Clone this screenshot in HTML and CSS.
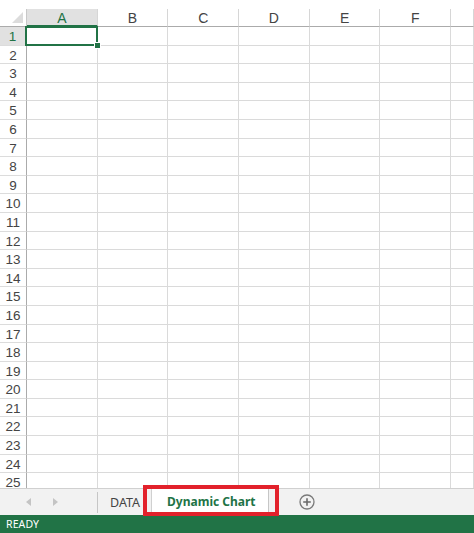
FILE: index.html
```html
<!DOCTYPE html>
<html lang="en">
<head>
<meta charset="utf-8">
<title>Dynamic Chart</title>
<link rel="stylesheet" href="styles.css">
</head>
<body>
<div class="top"></div>
<div class="sheet">
  <div class="corner"><svg width="11" height="11" viewBox="0 0 11 11"><polygon points="11,0 11,11 0,11" fill="#dcdcdc"/></svg></div>
  <div class="ch sel-h">A</div><div class="ch">B</div><div class="ch">C</div><div class="ch">D</div><div class="ch">E</div><div class="ch">F</div><div class="ch"></div>

  <div class="rh sel-r">1</div><div class="c a1"></div><div class="c"></div><div class="c"></div><div class="c"></div><div class="c"></div><div class="c"></div><div class="c"></div>
  <div class="rh">2</div><div class="c"></div><div class="c"></div><div class="c"></div><div class="c"></div><div class="c"></div><div class="c"></div><div class="c"></div>
  <div class="rh">3</div><div class="c"></div><div class="c"></div><div class="c"></div><div class="c"></div><div class="c"></div><div class="c"></div><div class="c"></div>
  <div class="rh">4</div><div class="c"></div><div class="c"></div><div class="c"></div><div class="c"></div><div class="c"></div><div class="c"></div><div class="c"></div>
  <div class="rh">5</div><div class="c"></div><div class="c"></div><div class="c"></div><div class="c"></div><div class="c"></div><div class="c"></div><div class="c"></div>
  <div class="rh">6</div><div class="c"></div><div class="c"></div><div class="c"></div><div class="c"></div><div class="c"></div><div class="c"></div><div class="c"></div>
  <div class="rh">7</div><div class="c"></div><div class="c"></div><div class="c"></div><div class="c"></div><div class="c"></div><div class="c"></div><div class="c"></div>
  <div class="rh">8</div><div class="c"></div><div class="c"></div><div class="c"></div><div class="c"></div><div class="c"></div><div class="c"></div><div class="c"></div>
  <div class="rh">9</div><div class="c"></div><div class="c"></div><div class="c"></div><div class="c"></div><div class="c"></div><div class="c"></div><div class="c"></div>
  <div class="rh">10</div><div class="c"></div><div class="c"></div><div class="c"></div><div class="c"></div><div class="c"></div><div class="c"></div><div class="c"></div>
  <div class="rh">11</div><div class="c"></div><div class="c"></div><div class="c"></div><div class="c"></div><div class="c"></div><div class="c"></div><div class="c"></div>
  <div class="rh">12</div><div class="c"></div><div class="c"></div><div class="c"></div><div class="c"></div><div class="c"></div><div class="c"></div><div class="c"></div>
  <div class="rh">13</div><div class="c"></div><div class="c"></div><div class="c"></div><div class="c"></div><div class="c"></div><div class="c"></div><div class="c"></div>
  <div class="rh">14</div><div class="c"></div><div class="c"></div><div class="c"></div><div class="c"></div><div class="c"></div><div class="c"></div><div class="c"></div>
  <div class="rh">15</div><div class="c"></div><div class="c"></div><div class="c"></div><div class="c"></div><div class="c"></div><div class="c"></div><div class="c"></div>
  <div class="rh">16</div><div class="c"></div><div class="c"></div><div class="c"></div><div class="c"></div><div class="c"></div><div class="c"></div><div class="c"></div>
  <div class="rh">17</div><div class="c"></div><div class="c"></div><div class="c"></div><div class="c"></div><div class="c"></div><div class="c"></div><div class="c"></div>
  <div class="rh">18</div><div class="c"></div><div class="c"></div><div class="c"></div><div class="c"></div><div class="c"></div><div class="c"></div><div class="c"></div>
  <div class="rh">19</div><div class="c"></div><div class="c"></div><div class="c"></div><div class="c"></div><div class="c"></div><div class="c"></div><div class="c"></div>
  <div class="rh">20</div><div class="c"></div><div class="c"></div><div class="c"></div><div class="c"></div><div class="c"></div><div class="c"></div><div class="c"></div>
  <div class="rh">21</div><div class="c"></div><div class="c"></div><div class="c"></div><div class="c"></div><div class="c"></div><div class="c"></div><div class="c"></div>
  <div class="rh">22</div><div class="c"></div><div class="c"></div><div class="c"></div><div class="c"></div><div class="c"></div><div class="c"></div><div class="c"></div>
  <div class="rh">23</div><div class="c"></div><div class="c"></div><div class="c"></div><div class="c"></div><div class="c"></div><div class="c"></div><div class="c"></div>
  <div class="rh">24</div><div class="c"></div><div class="c"></div><div class="c"></div><div class="c"></div><div class="c"></div><div class="c"></div><div class="c"></div>
  <div class="rh">25</div><div class="c"></div><div class="c"></div><div class="c"></div><div class="c"></div><div class="c"></div><div class="c"></div><div class="c"></div>
</div>
<div class="tabbar">
  <div class="nav">
    <svg class="arrow" width="5" height="8" viewBox="0 0 5 8"><polygon points="5,0 5,8 0,4" fill="#c4c4c4"/></svg>
    <svg class="arrow" width="5" height="8" viewBox="0 0 5 8"><polygon points="0,0 0,8 5,4" fill="#c4c4c4"/></svg>
  </div>
  <div class="tab">DATA</div>
  <div class="tab active">Dynamic Chart</div>
  <svg class="add" width="16" height="16" viewBox="0 0 16 16"><circle cx="8" cy="8" r="7" fill="none" stroke="#7a7a7a" stroke-width="1.3"/><path d="M8 4.2V11.8M4.2 8H11.8" stroke="#6a6a6a" stroke-width="1.6"/></svg>
  <div class="mark"></div>
</div>
<div class="status">READY</div>
</body>
</html>
```

FILE: styles.css
```css
html, body {
  margin: 0;
  padding: 0;
  background: #ffffff;
}
body {
  width: 474px;
  height: 533px;
  overflow: hidden;
  font-family: "Noto Sans", "Liberation Sans", Arial, sans-serif;
}
.top {
  height: 9px;
  background: #ffffff;
}
.sheet {
  display: grid;
  grid-template-columns: 27px repeat(6, 70.7px) 1fr;
  grid-template-rows: 18px;
  grid-auto-rows: 18.6px;
  height: 479px;
  overflow: hidden;
  font-family: "Liberation Sans", Arial, sans-serif;
}
.sheet > div {
  box-sizing: border-box;
}
.corner {
  border-right: 1px solid #c8c8c8;
  border-bottom: 1px solid #ababab;
  display: flex;
  align-items: flex-end;
  justify-content: flex-end;
  padding: 0 3px 3px 0;
}
.corner svg {
  display: block;
}
.ch {
  border-right: 1px solid #d6d6d6;
  border-bottom: 1px solid #ababab;
  color: #444444;
  font-size: 14px;
  line-height: 18px;
  text-align: center;
}
.ch.sel-h {
  background: #e1e1e1;
  color: #217346;
  border-bottom: 2px solid #217346;
}
.rh {
  border-right: 1px solid #ababab;
  border-bottom: 1px solid #dcdcdc;
  color: #444444;
  font-size: 13.5px;
  line-height: 19px;
  text-align: center;
}
.rh.sel-r {
  background: #e1e1e1;
  color: #217346;
  border-right: 2px solid #217346;
}
.c {
  border-right: 1px solid #dadada;
  border-bottom: 1px solid #dadada;
}
.c.a1 {
  position: relative;
}
.c.a1::before {
  content: "";
  position: absolute;
  left: -2px;
  top: -1px;
  right: -1px;
  bottom: -1px;
  border: 2px solid #217346;
}
.c.a1::after {
  content: "";
  position: absolute;
  right: -4px;
  bottom: -4px;
  width: 5px;
  height: 5px;
  background: #217346;
  border: 1px solid #ffffff;
}
.tabbar {
  position: relative;
  height: 27px;
  background: #f2f2f2;
  border-top: 1px solid #d0d0d0;
  box-sizing: border-box;
  display: flex;
  align-items: stretch;
}
.nav {
  width: 97px;
  display: flex;
  align-items: center;
  gap: 22px;
  padding-left: 26px;
  box-sizing: border-box;
}
.arrow {
  display: block;
}
.tab {
  margin: 3px 0 2px;
  border-left: 1px solid #c6c6c6;
  color: #444444;
  font-size: 12.5px;
  display: flex;
  align-items: center;
  padding: 0 11px 0 12px;
}
.tab.active {
  margin: -1px 0 0;
  background: #ffffff;
  border-left: 1px solid #d0d0d0;
  border-right: 1px solid #c6c6c6;
  color: #217346;
  font-weight: 700;
  font-size: 12px;
  padding: 0 12px 0 15px;
}
.add {
  display: block;
  align-self: center;
  margin-left: 30px;
}
.mark {
  position: absolute;
  left: 143px;
  top: -4px;
  width: 136px;
  height: 31px;
  border: 4px solid #e2212b;
  box-sizing: border-box;
}
.status {
  height: 18px;
  background: #217346;
  color: #ffffff;
  font-size: 10.5px;
  line-height: 18px;
  padding-left: 6px;
  letter-spacing: 0.1px;
}
```
